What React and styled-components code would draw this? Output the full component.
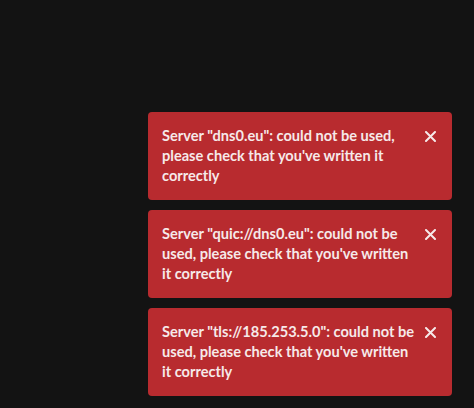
import React from "react";
import styled, { createGlobalStyle } from "styled-components";

const Global = createGlobalStyle`
  html, body { margin: 0; padding: 0; background: #131313; }
  body { font-family: Lato, "Noto Sans", sans-serif; }
`;

const Page = styled.div`
  width: 474px;
  height: 408px;
  box-sizing: border-box;
  padding: 112px 22px 0 0;
  display: flex;
  flex-direction: column;
  align-items: flex-end;
  gap: 10px;
  overflow: hidden;
`;

const Toast = styled.div`
  width: 304px;
  box-sizing: border-box;
  background: #b82b2f;
  border-radius: 4px;
  padding: 14px 12px 14px 14px;
  display: flex;
  align-items: flex-start;
`;

const Message = styled.div`
  flex: 1;
  color: #f6e9e9;
  font-size: 14.6px;
  font-weight: 700;
  line-height: 20px;
`;

const Close = styled.button`
  flex: none;
  width: 20px;
  height: 20px;
  padding: 0;
  border: 0;
  background: transparent;
  color: #f6e9e9;
  display: flex;
  align-items: center;
  justify-content: center;
  cursor: pointer;
`;

const X = () => (
  <svg width="11" height="11" viewBox="0 0 11 11">
    <path d="M1 1L10 10M10 1L1 10" stroke="currentColor" strokeWidth="2" strokeLinecap="round" />
  </svg>
);

const messages = [
  'Server "dns0.eu": could not be used, please check that you\'ve written it correctly',
  'Server "quic://dns0.eu": could not be used, please check that you\'ve written it correctly',
  'Server "tls://185.253.5.0": could not be used, please check that you\'ve written it correctly',
];

export default function App() {
  return (
    <>
      <Global />
      <Page>
        {messages.map((m) => (
          <Toast key={m}>
            <Message>{m}</Message>
            <Close aria-label="Close"><X /></Close>
          </Toast>
        ))}
      </Page>
    </>
  );
}
